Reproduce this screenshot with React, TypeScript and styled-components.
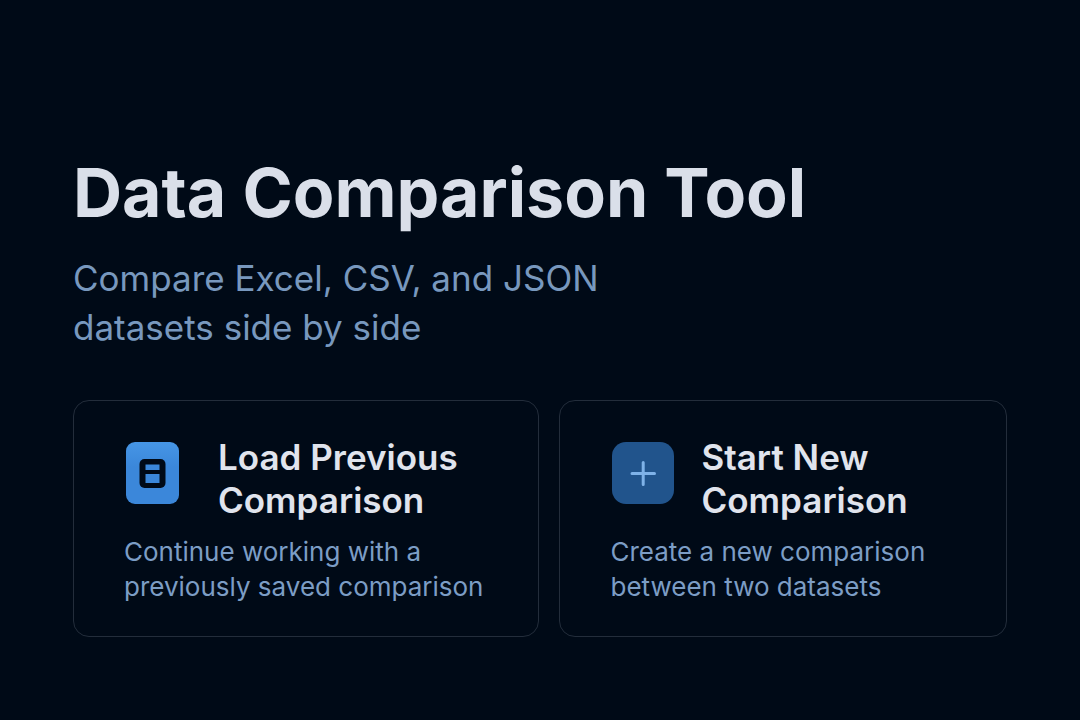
import React from 'react';
import styled, { createGlobalStyle } from 'styled-components';

const GlobalStyle = createGlobalStyle`
  *, *::before, *::after { box-sizing: border-box; }
  body {
    margin: 0;
    background: #000a17;
    font-family: Inter, 'Liberation Sans', sans-serif;
  }
`;

const Page = styled.main`
  min-height: 100vh;
  padding: 150px 73px 83px;
`;

const Title = styled.h1`
  margin: 0;
  font-size: 68px;
  line-height: 84px;
  font-weight: 650;
  color: #dadfe9;
`;

const Subtitle = styled.p`
  margin: 20px 0 0;
  font-size: 35px;
  line-height: 49px;
  color: #7898be;
`;

const Cards = styled.div`
  display: grid;
  grid-template-columns: 467fr 448fr;
  gap: 20px;
  margin-top: 48px;
`;

const Card = styled.button`
  padding: 35px 32px 32px 50px;
  border: 1px solid #232d3b;
  border-radius: 16px;
  background: transparent;
  font-family: inherit;
  text-align: left;
  cursor: pointer;
`;

const CardHeader = styled.span<{ $gap: number }>`
  display: flex;
  align-items: flex-start;
  gap: ${(p) => p.$gap}px;
`;

const CardTitle = styled.span`
  font-size: 35px;
  line-height: 43px;
  font-weight: 600;
  color: #e0e4ed;
`;

const CardText = styled.span`
  display: block;
  margin-top: 12px;
  font-size: 26px;
  line-height: 35px;
  color: #7c9dc5;
`;

const Icon = styled.svg`
  display: block;
  flex: none;
  margin-top: 5px;
`;

const SavedIcon = () => (
  <Icon width="60" height="64" viewBox="0 0 60 64" aria-hidden="true">
    <defs>
      <linearGradient id="saved-fill" x1="0" y1="0" x2="0" y2="1">
        <stop offset="0" stopColor="#4696e6" />
        <stop offset="0.4" stopColor="#3b87da" />
        <stop offset="1" stopColor="#3b87da" />
      </linearGradient>
    </defs>
    <rect x="2" y="1" width="53" height="62" rx="9" fill="url(#saved-fill)" />
    <rect x="15.5" y="18" width="26" height="29" rx="5" fill="#000a17" />
    <rect x="21.5" y="23.5" width="14" height="5.5" fill="#3b87da" />
    <rect x="21.5" y="33" width="14" height="9" fill="#3b87da" />
  </Icon>
);

const PlusIcon = () => (
  <Icon width="64" height="64" viewBox="0 0 64 64" aria-hidden="true">
    <rect x="2" y="1" width="62" height="62" rx="14" fill="#21548c" />
    <path d="M22 32.5H44.5M33.2 21.5V43.5" stroke="#7fb2e8" strokeWidth="3" strokeLinecap="round" />
  </Icon>
);

export default function App() {
  return (
    <Page>
      <GlobalStyle />
      <Title>Data Comparison Tool</Title>
      <Subtitle>
        Compare Excel, CSV, and JSON
        <br />
        datasets side by side
      </Subtitle>
      <Cards>
        <Card type="button">
          <CardHeader $gap={34}>
            <SavedIcon />
            <CardTitle>
              Load Previous
              <br />
              Comparison
            </CardTitle>
          </CardHeader>
          <CardText>
            Continue working with a
            <br />
            previously saved comparison
          </CardText>
        </Card>
        <Card type="button">
          <CardHeader $gap={27}>
            <PlusIcon />
            <CardTitle>
              Start New
              <br />
              Comparison
            </CardTitle>
          </CardHeader>
          <CardText>
            Create a new comparison
            <br />
            between two datasets
          </CardText>
        </Card>
      </Cards>
    </Page>
  );
}
